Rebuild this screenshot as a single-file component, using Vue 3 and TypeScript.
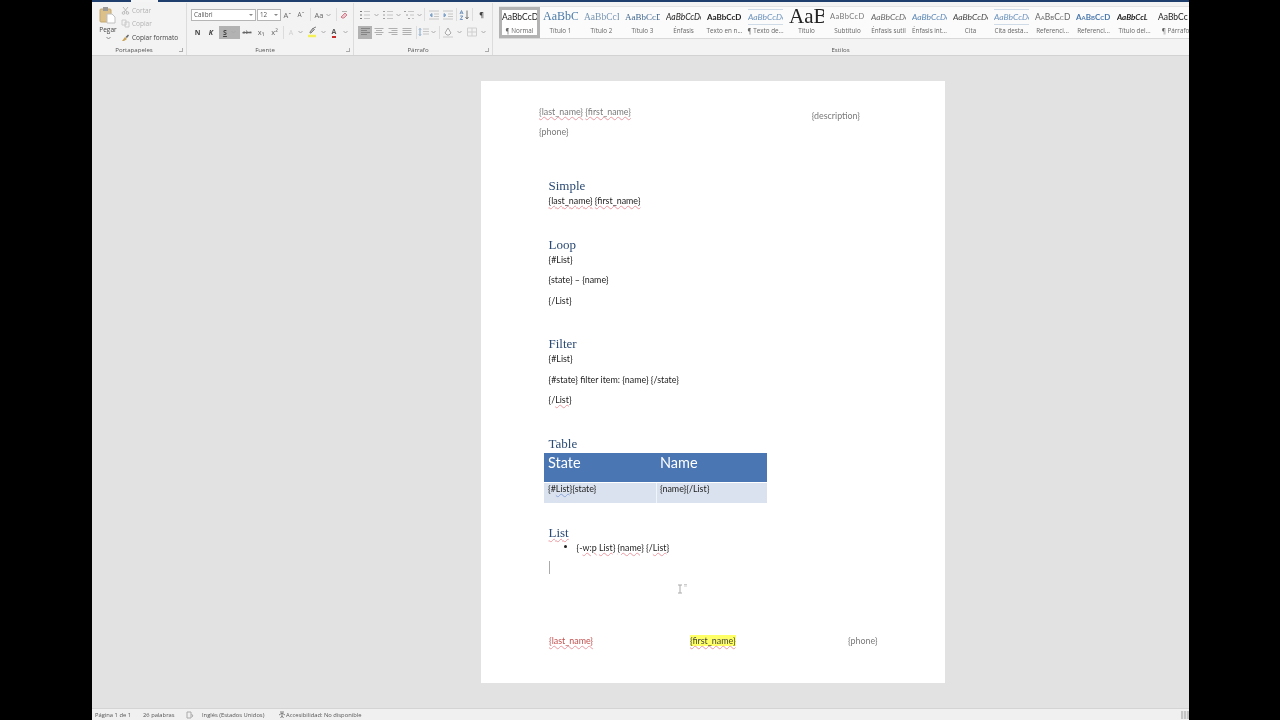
<script setup lang="ts">
interface Stroke { d: string; s?: string; f?: string; w?: number }
interface Tool { w: number; icon?: string; text?: string; cls?: string; arrow?: boolean; sep?: boolean; active?: boolean }

const G = '#8d8d8d'
const B = '#7fa3c9'
const L = '#c6c6c6'
const icons: Record<string, Stroke[]> = {
  eraser: [{ d: 'M4 9 8 5l2 2-3 3H5z', s: '#cf7f8c', f: '#efc3cb' }, { d: 'M5 3.500h5', s: '#b0b0b0' }],
  bullets: [{ d: 'M2 3.500h2M2 7h2M2 10.500h2', s: '#777' }, { d: 'M6 3.500h6M6 7h6M6 10.500h6', s: L }],
  numbers: [{ d: 'M2 3.500h2M2 7h2M2 10.500h2', s: '#a0a0a0' }, { d: 'M6 3.500h6M6 7h6M6 10.500h6', s: L }],
  multi: [{ d: 'M2 3.500h2M4 7h2M6 10.500h2', s: '#a0a0a0' }, { d: 'M6 3.500h6M8 7h4M10 10.500h2', s: L }],
  outdent: [{ d: 'M2 3h10M7 6h5M7 8.500h5M2 11h10', s: L }, { d: 'M5 5.500 3 7.200 5 9z', s: B, f: B }],
  indent: [{ d: 'M2 3h10M7 6h5M7 8.500h5M2 11h10', s: L }, { d: 'M3 5.500 5 7.200 3 9z', s: B, f: B }],
  sort: [{ d: 'M10 2.500v8M8.500 9l1.500 2 1.500-2', s: '#777' }, { d: 'M3 6l1.500-3.500L6 6M3.500 5h2M3.200 8h2.600L3.200 11.500h2.600', s: '#6f93bd' }],
  alignL: [{ d: 'M3 3.500h9M3 5.500h6M3 7.500h9M3 9.500h6', s: '#858585' }],
  alignC: [{ d: 'M2.500 3.500h9M4 5.500h6M2.500 7.500h9M4 9.500h6', s: '#b0b0b0' }],
  alignR: [{ d: 'M2.500 3.500h9M5.500 5.500h6M2.500 7.500h9M5.500 9.500h6', s: '#b0b0b0' }],
  alignJ: [{ d: 'M2.500 3.500h9M2.500 5.500h9M2.500 7.500h9M2.500 9.500h9', s: '#b0b0b0' }],
  spacing: [{ d: 'M6 4h6M6 6.500h6M6 9h6', s: L }, { d: 'M3 3.500v7M2 4.500 3 3.500l1 1M2 9.500 3 10.500l1-1', s: B }],
  fill: [{ d: 'M4 8l3-5 3 5-2 2H6z', s: '#a8a8a8', f: '#f8f8f8' }, { d: 'M2 12h10', s: '#d2d2d2', w: 1.200 }],
  borders: [{ d: 'M2.500 3h9v8h-9zM7 3v8M2.500 7h9', s: '#cfcfcf' }],
  marker: [{ d: 'M5 7l3-4 1.500 1.500L6 8H5zM8.500 3 11 2', s: '#808080', f: '#b9b9b9' }, { d: 'M3 11h8', s: '#f4f05a', w: 2.500 }],
}

const fontRow1: Tool[] = [
  { w: 13, text: 'Aˆ', cls: 'dk' }, { w: 14, text: 'Aˇ', cls: 'dk small' }, { w: 4, sep: true },
  { w: 14, text: 'Aa', cls: 'dk' }, { w: 5, arrow: true }, { w: 5 }, { w: 1, sep: true }, { w: 13, icon: 'eraser' },
]
const fontRow2: Tool[] = [
  { w: 13, text: 'N', cls: 'bold' }, { w: 14, text: 'K', cls: 'bold it' }, { w: 1 },
  { w: 21, text: 'S', cls: 'bold und', active: true, arrow: true },
  { w: 14, text: 'abc', cls: 'strike' }, { w: 14, text: 'x₁', cls: 'dk' }, { w: 13, text: 'x²', cls: 'dk' }, { w: 4, sep: true },
  { w: 12, text: 'A', cls: 'ghost' }, { w: 6, arrow: true }, { w: 2 }, { w: 14, icon: 'marker' }, { w: 1 }, { w: 6, arrow: true }, { w: 1 },
  { w: 14, text: 'A', cls: 'redA' }, { w: 1 }, { w: 6, arrow: true },
]
const paraRow1: Tool[] = [
  { w: 13, icon: 'bullets' }, { w: 10, arrow: true }, { w: 13, icon: 'numbers' }, { w: 8, arrow: true },
  { w: 14, icon: 'multi' }, { w: 7, arrow: true }, { w: 1 }, { w: 1, sep: true }, { w: 2 },
  { w: 14, icon: 'outdent' }, { w: 13, icon: 'indent' }, { w: 2 }, { w: 1, sep: true }, { w: 0 },
  { w: 13, icon: 'sort' }, { w: 2 }, { w: 1, sep: true }, { w: 2 }, { w: 13, text: '¶', cls: 'bold' },
]
const paraRow2: Tool[] = [
  { w: 14, icon: 'alignL', active: true }, { w: 14, icon: 'alignC' }, { w: 14, icon: 'alignR' }, { w: 14, icon: 'alignJ' },
  { w: 2 }, { w: 1, sep: true }, { w: 0 }, { w: 13, icon: 'spacing' }, { w: 6, arrow: true }, { w: 3 }, { w: 1, sep: true }, { w: 1 },
  { w: 14, icon: 'fill' }, { w: 8, arrow: true }, { w: 2 }, { w: 14, icon: 'borders' }, { w: 1 }, { w: 6, arrow: true },
]

const styles = [
  { t: 'AaBbCcDc', l: '¶ Normal', c: 'sNormal' }, { t: 'AaBbC', l: 'Título 1', c: 'sT1' },
  { t: 'AaBbCcI', l: 'Título 2', c: 'sT2' }, { t: 'AaBbCcD', l: 'Título 3', c: 'sT3' },
  { t: 'AaBbCcDc', l: 'Énfasis', c: 'sEm' }, { t: 'AaBbCcD', l: 'Texto en n...', c: 'sBold' },
  { t: 'AaBbCcDc', l: '¶ Texto de...', c: 'sQuoteB' }, { t: 'AaB', l: 'Título', c: 'sTitle' },
  { t: 'AaBbCcD', l: 'Subtítulo', c: 'sSub' }, { t: 'AaBbCcDc', l: 'Énfasis sutil', c: 'sSubtle' },
  { t: 'AaBbCcDc', l: 'Énfasis int...', c: 'sInt' }, { t: 'AaBbCcDc', l: 'Cita', c: 'sCita' },
  { t: 'AaBbCcDc', l: 'Cita desta...', c: 'sQuoteB' }, { t: 'AaBbCcDc', l: 'Referenci...', c: 'sRef' },
  { t: 'AaBbCcD', l: 'Referenci...', c: 'sRefB' }, { t: 'AaBbCcL', l: 'Título del...', c: 'sBook' },
  { t: 'AaBbCc', l: '¶ Párrafo', c: 'sNormal' },
]
</script>

<template>
  <div class="screen">
    <div class="app">
      <div class="topline"><span class="activeTab"></span></div>
      <div class="ribbon">
        <section class="group clip">
          <div class="clipBody">
            <div class="paste">
              <svg width="18" height="18" viewBox="0 0 18 18">
                <rect x="1" y="3" width="11" height="13" rx="1" fill="#dcc08a" stroke="#c4a873" />
                <rect x="4" y="1" width="5" height="4" fill="#9a9a9a" />
                <path d="M8 8h5l3 3v6H8z" fill="#fff" stroke="#c0c0c0" />
              </svg>
              <span>Pegar</span>
              <svg class="chev" width="5" height="4" viewBox="0 0 5 4"><path d="M.5 1 2.500 3 4.500 1" fill="none" stroke="#888" /></svg>
            </div>
            <div class="clipList">
              <div class="clipItem off">
                <svg width="9" height="9" viewBox="0 0 9 9"><path d="M2 1l4 5M7 1 3 6" stroke="#bbb" fill="none" /><circle cx="2.500" cy="7" r="1.300" stroke="#bbb" fill="none" /><circle cx="6.500" cy="7" r="1.300" stroke="#bbb" fill="none" /></svg>
                <span>Cortar</span>
              </div>
              <div class="clipItem off">
                <svg width="9" height="9" viewBox="0 0 9 9"><path d="M1 1h4v5H1zM4 3h4v5H4z" stroke="#ccc" fill="#f3f3f3" /></svg>
                <span>Copiar</span>
              </div>
              <div class="clipItem">
                <svg width="9" height="9" viewBox="0 0 9 9"><path d="M1 8l3-4 2 2-3 2z" fill="#c9a35a" /><path d="M4.500 4 7 1.500l1 1L6 5" fill="#666" /></svg>
                <span>Copiar formato</span>
              </div>
            </div>
          </div>
          <footer class="gLabel">Portapapeles<i class="launch"></i></footer>
        </section>

        <section class="group font">
          <div class="gBody">
            <div class="toolRow">
              <div class="combo wide">Calibri<b class="caret"></b></div>
              <div class="combo narrow">12<b class="caret"></b></div>
              <template v-for="(t, i) in fontRow1" :key="i">
                <div class="tool" :class="[t.cls, { active: t.active, sep: t.sep }]" :style="{ width: t.w + 'px' }">
                  <svg v-if="t.icon" width="14" height="14" viewBox="0 0 14 14"><path v-for="(p, k) in icons[t.icon]" :key="k" :d="p.d" :stroke="p.s || G" :fill="p.f || 'none'" :stroke-width="p.w || 1" /></svg>
                  <span v-if="t.text">{{ t.text }}</span>
                  <svg v-if="t.arrow" class="ar" width="5" height="4" viewBox="0 0 5 4"><path d="M.5 1 2.500 3 4.500 1" fill="none" stroke="#aaa" /></svg>
                </div>
              </template>
            </div>
            <div class="toolRow second">
              <template v-for="(t, i) in fontRow2" :key="i">
                <div class="tool" :class="[t.cls, { active: t.active, sep: t.sep }]" :style="{ width: t.w + 'px' }">
                  <svg v-if="t.icon" width="14" height="14" viewBox="0 0 14 14"><path v-for="(p, k) in icons[t.icon]" :key="k" :d="p.d" :stroke="p.s || G" :fill="p.f || 'none'" :stroke-width="p.w || 1" /></svg>
                  <span v-if="t.text">{{ t.text }}</span>
                  <svg v-if="t.arrow" class="ar" width="5" height="4" viewBox="0 0 5 4"><path d="M.5 1 2.500 3 4.500 1" fill="none" stroke="#aaa" /></svg>
                </div>
              </template>
            </div>
          </div>
          <footer class="gLabel">Fuente<i class="launch"></i></footer>
        </section>

        <section class="group para">
          <div class="gBody">
            <div class="toolRow">
              <template v-for="(t, i) in paraRow1" :key="i">
                <div class="tool" :class="[t.cls, { active: t.active, sep: t.sep }]" :style="{ width: t.w + 'px' }">
                  <svg v-if="t.icon" width="14" height="14" viewBox="0 0 14 14"><path v-for="(p, k) in icons[t.icon]" :key="k" :d="p.d" :stroke="p.s || G" :fill="p.f || 'none'" :stroke-width="p.w || 1" /></svg>
                  <span v-if="t.text">{{ t.text }}</span>
                  <svg v-if="t.arrow" class="ar" width="5" height="4" viewBox="0 0 5 4"><path d="M.5 1 2.500 3 4.500 1" fill="none" stroke="#aaa" /></svg>
                </div>
              </template>
            </div>
            <div class="toolRow second">
              <template v-for="(t, i) in paraRow2" :key="i">
                <div class="tool" :class="[t.cls, { active: t.active, sep: t.sep }]" :style="{ width: t.w + 'px' }">
                  <svg v-if="t.icon" width="14" height="14" viewBox="0 0 14 14"><path v-for="(p, k) in icons[t.icon]" :key="k" :d="p.d" :stroke="p.s || G" :fill="p.f || 'none'" :stroke-width="p.w || 1" /></svg>
                  <span v-if="t.text">{{ t.text }}</span>
                  <svg v-if="t.arrow" class="ar" width="5" height="4" viewBox="0 0 5 4"><path d="M.5 1 2.500 3 4.500 1" fill="none" stroke="#aaa" /></svg>
                </div>
              </template>
            </div>
          </div>
          <footer class="gLabel">Párrafo<i class="launch"></i></footer>
        </section>

        <section class="stylesGroup">
          <div class="gallery">
            <div v-for="(s, i) in styles" :key="i" class="styleItem" :class="{ selected: i === 0 }">
              <div class="preview" :class="s.c"><span>{{ s.t }}</span></div>
              <div class="styleLabel">{{ s.l }}</div>
            </div>
          </div>
          <footer class="gLabel stylesLabel">Estilos</footer>
        </section>
      </div>

      <main class="canvas">
        <article class="page">
          <header class="docHeader">
            <div>
              <p class="gray line"><span class="sq">{last_name}</span> <span class="sq">{first_name}</span></p>
              <p class="gray line phone">{phone}</p>
            </div>
            <p class="gray line desc">{description}</p>
          </header>

          <div class="docBody">
            <section class="sec first">
              <h2>Simple</h2>
              <p class="line"><span class="sq">{last_name}</span> <span class="sq">{first_name}</span></p>
            </section>
            <section class="sec">
              <h2>Loop</h2>
              <p class="line">{#List}</p>
              <p class="line gapped">{state} – {name}</p>
              <p class="line gapped">{/List}</p>
            </section>
            <section class="sec">
              <h2>Filter</h2>
              <p class="line">{#List}</p>
              <p class="line gapped">{#state} filter item: {name} {/state}</p>
              <p class="line gapped">{/<span class="sq">List</span>}</p>
            </section>
            <section class="sec">
              <h2>Table</h2>
              <div class="docTable">
                <div class="th">State</div>
                <div class="th">Name</div>
                <div class="td">{#<span class="sqb">List</span>}{state}</div>
                <div class="td">{name}{/List}</div>
              </div>
            </section>
            <section class="sec listSec">
              <h2><span class="sq">List</span></h2>
              <div class="bulletLine">
                <i class="dot"></i>
                <p class="line">{-<span class="sq">w:p</span> <span class="sq">List</span>} <span class="sq">{name}</span> {/<span class="sq">List</span>}</p>
              </div>
              <div class="caretLine"><i class="textCaret"></i></div>
            </section>
          </div>

          <footer class="docFooter">
            <span class="redText"><span class="sq">{last_name}</span></span>
            <span><mark class="sq">{first_name}</mark></span>
            <span class="gray">{phone}</span>
          </footer>

          <svg class="ibeam" width="14" height="12" viewBox="0 0 14 12">
            <path d="M2 2h4M4 2v8M2 10h4" stroke="#aaa" fill="none" />
            <path d="M8 1.500h3M8 3h3" stroke="#ccc" fill="none" />
          </svg>
        </article>
      </main>

      <div class="status">
        <span class="s1">Página 1 de 1</span>
        <span class="s2">26 palabras</span>
        <svg class="s3" width="8" height="8" viewBox="0 0 8 8"><path d="M1 1h4v6H1zM5.500 3l1.500 2-1.500 1" fill="none" stroke="#aaa" /></svg>
        <span class="s4">Inglés (Estados Unidos)</span>
        <svg class="s5" width="8" height="8" viewBox="0 0 8 8"><path d="M2 1h4M1 4l3-2 3 2M4 2v3M2.500 7 4 5l1.500 2" fill="none" stroke="#666" stroke-width=".8" /></svg>
        <span class="s6">Accesibilidad: No disponible</span>
        <span class="views"></span>
      </div>
    </div>
  </div>
</template>

<style>
html, body { margin: 0; background: #000; }
</style>

<style scoped>
.screen { width: 1280px; height: 720px; background: #000; padding-left: 92px; box-sizing: border-box; overflow: hidden; }
.app { width: 1097px; height: 720px; display: flex; flex-direction: column; background: #e2e2e2; font-family: "Open Sans", sans-serif; filter: blur(.35px); }
.topline { height: 1.5px; background: #1f3f6e; flex: none; position: relative; }
.activeTab { position: absolute; left: 39px; width: 27px; top: 0; bottom: 0; background: #f5f5f5; }

.ribbon { height: 53px; flex: none; display: flex; background: #f3f3f3; border-bottom: 1px solid #d2d2d2; box-sizing: content-box; }
.group { position: relative; display: flex; flex-direction: column; border-right: 1px solid #dcdcdc; box-sizing: border-box; height: 52px; margin-top: 1px; }
.clip { width: 95px; }
.font { width: 167px; }
.para { width: 139px; }
.clipBody { height: 43.500px; display: flex; }
.gBody { height: 43.500px; padding: 5.500px 0 0 4px; box-sizing: border-box; }
.gLabel { position: relative; text-align: center; font-size: 6.100px; line-height: 10px; color: #555; padding-right: 10px; }
.launch { position: absolute; right: 3px; top: 3px; width: 3px; height: 3px; border-right: 1px solid #aaa; border-bottom: 1px solid #aaa; }

.paste { width: 32px; display: flex; flex-direction: column; align-items: center; padding-top: 3px; font-size: 6.500px; color: #444; box-sizing: border-box; }
.paste span { line-height: 9px; margin-top: 1px; }
.chev { margin-top: 2px; }
.clipList { display: flex; flex-direction: column; padding-top: 1px; }
.clipItem { display: flex; align-items: center; gap: 2px; height: 13.500px; font-size: 6.500px; color: #444; white-space: nowrap; margin-left: -3px; }
.clipItem.off { color: #b2b2b2; }

.toolRow { display: flex; align-items: center; height: 13px; font-size: 7px; color: #555; }
.toolRow.second { margin-top: 4.500px; }
.combo { position: relative; height: 12px; box-sizing: border-box; background: #fff; border: 1px solid #b5b5b5; font-size: 6.300px; line-height: 10px; padding-left: 2px; color: #555; }
.combo.wide { width: 65px; margin-right: 1px; }
.combo.narrow { width: 24px; }
.caret { position: absolute; right: 2px; top: 4px; border: 2px solid transparent; border-top-color: #888; }
.tool { flex: none; display: flex; align-items: center; justify-content: center; height: 13px; overflow: visible; }
.tool svg { flex: none; }
.tool.sep { background: linear-gradient(#dcdcdc, #dcdcdc) center / 1px 100% no-repeat; }
.tool.active { background: #b2b2b2; }
.tool.active .ar { margin-left: 4px; }
.dk { color: #666; font-size: 7.500px; }
.small { font-size: 6.500px; }
.bold { font-weight: 700; color: #444; }
.it { font-style: italic; }
.und span { text-decoration: underline; }
.strike { font-size: 5.500px; color: #666; }
.strike span { text-decoration: line-through; }
.ghost { color: #cfcfcf; }
.redA span { color: #555; font-weight: 700; border-bottom: 2px solid #c62b2b; line-height: 9px; }

.stylesGroup { flex: 1; display: flex; flex-direction: column; padding: 4px 0 0 7px; min-width: 0; overflow: hidden; }
.gallery { display: flex; height: 33.500px; box-sizing: border-box; background: #fbfbfb; border-bottom: 1px solid #d9d9d9; border-top: 1px solid #e4e4e4; margin-left: -1px; }
.styleItem { flex: none; width: 41px; height: 31.500px; box-sizing: border-box; display: flex; flex-direction: column; align-items: center; overflow: hidden; }
.styleItem.selected { border: 3px solid #b3b3b3; background: #fff; }
.preview { height: 18px; width: 35px; flex: none; display: flex; align-items: center; justify-content: flex-start; overflow: hidden; white-space: nowrap; font-family: "Lato", sans-serif; font-size: 8.500px; color: #222; margin-top: 1px; }
.selected .preview { margin-top: -2px; }
.styleLabel { font-size: 6.300px; line-height: 10px; color: #666; white-space: nowrap; }
.stylesLabel { margin-top: 6px; padding-right: 8px; }
.sT1 { font-family: "Liberation Serif", serif; font-size: 12px; color: #4a7aa8; }
.sT2 { font-family: "Liberation Serif", serif; font-size: 9.500px; color: #7896b4; }
.sT3 { font-family: "Liberation Serif", serif; font-size: 9px; color: #3f6590; }
.sEm { font-style: italic; font-weight: 500; color: #333; }
.sBold { font-weight: 700; color: #222; font-size: 8px; }
.sQuoteB { font-style: italic; color: #6c93bd; }
.sQuoteB span { border-top: 1px solid #cfdbe6; border-bottom: 1px solid #cfdbe6; padding: 2px 0; }
.sTitle { font-family: "Liberation Serif", serif; font-size: 21px; color: #222; }
.sSub { letter-spacing: .4px; color: #777; font-size: 7.500px; }
.sSubtle { font-style: italic; color: #666; }
.sInt { font-style: italic; color: #5b86b5; }
.sCita { font-style: italic; color: #444; }
.sRef { font-variant: small-caps; color: #666; }
.sRefB { font-variant: small-caps; font-weight: 700; color: #4a78ad; font-size: 8px; }
.sBook { font-style: italic; font-weight: 700; color: #222; font-size: 8px; }

.canvas { flex: 1; min-height: 0; padding: 25.500px 0 0 389px; }
.page { position: relative; width: 464px; height: 602px; background: #fff; display: flex; flex-direction: column; font-family: "Lato", sans-serif; font-size: 8.900px; color: #222; }
.docHeader { display: flex; justify-content: space-between; padding: 23px 85px 0 58px; height: 57px; box-sizing: border-box; flex: none; }
p { margin: 0; }
.line { line-height: 15px; height: 14px; white-space: pre-wrap; }
.gray { color: #7a7a7a; }
.phone { margin-top: 6px; }
.desc { margin-top: 4px; }
.docBody { padding-left: 67.500px; }
.sec { margin-top: 29.500px; }
.sec.first { margin-top: 40px; }
.sec.listSec { margin-top: 22px; }
h2 { margin: 0; font-family: "Liberation Serif", serif; font-weight: 400; font-size: 13px; line-height: 15px; color: #2b4a74; }
.gapped { margin-top: 6.500px; }
.sq { text-decoration: underline wavy #eb9aa2 .7px; text-underline-offset: 1px; }
.sqb { text-decoration: underline wavy #8ea6dc .7px; text-underline-offset: 1px; }
.docTable { display: grid; grid-template-columns: 112px 111px; grid-template-rows: 29px 21px; margin: 2px 0 0 -4.500px; width: 223px; }
.th { background: #4a76b3; color: #fff; font-size: 14.500px; line-height: 19px; padding-left: 4px; }
.td { background: #d9e2ee; margin-top: 1px; line-height: 11px; padding-left: 4px; }
.td:last-child { border-left: 1px solid #f1f4f8; padding-left: 3px; }
.bulletLine { position: relative; padding-left: 28px; }
.dot { position: absolute; left: 15px; top: 5.500px; width: 3px; height: 3px; border-radius: 50%; background: #222; }
.caretLine { height: 14px; margin-top: 7px; }
.textCaret { display: block; width: 1px; height: 13px; background: #aaa; }
.docFooter { margin-top: auto; display: grid; grid-template-columns: 141px 158px auto; padding: 0 0 36px 68px; line-height: 13px; }
.redText { color: #c0504d; }
mark { background: #ffff66; color: #444; padding: 0; }
.ibeam { position: absolute; left: 195px; top: 502px; }

.status { height: 12px; flex: none; display: flex; align-items: center; background: #f0f0f0; border-top: 1px solid #d4d4d4; font-size: 5.800px; color: #555; white-space: nowrap; box-sizing: border-box; }
.s1 { margin-left: 3px; width: 48px; }
.s2 { width: 43px; }
.s3 { margin-right: 8px; }
.s4 { width: 76px; }
.views { margin-left: auto; width: 8px; height: 8px; background: repeating-linear-gradient(90deg, #c5c5c5 0 2px, #e5e5e5 2px 3px); }
</style>
